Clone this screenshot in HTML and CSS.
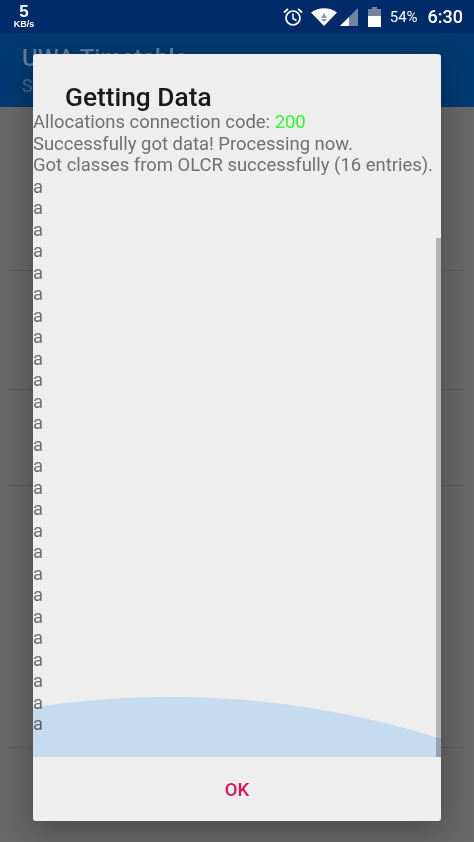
FILE: index.html
```html
<!DOCTYPE html>
<html lang="en">
<head>
    <meta charset="UTF-8">
    <meta name="viewport" content="width=device-width, initial-scale=1.0">
    <title>UWA Timetable</title>
    <link rel="stylesheet" href="styles.css">
</head>
<body>
    <div class="status-bar">
        <div class="speed"><span class="speed-num">5</span><span class="speed-unit">KB/s</span></div>
        <div class="status-right">
            <svg class="icon-alarm" width="20" height="20" viewBox="0 0 20 20">
                <circle cx="10" cy="11" r="7" fill="none" stroke="#fff" stroke-width="1.7"/>
                <path d="M10 6.5V11.5L13.5 13.5" fill="none" stroke="#fff" stroke-width="1.5"/>
                <path d="M1 5.5L5 1.8M19 5.5L15 1.8" fill="none" stroke="#fff" stroke-width="1.8"/>
            </svg>
            <svg class="icon-wifi" width="26" height="18" viewBox="0 0 26 18">
                <path d="M0 4.5C7 -1.2 19 -1.2 26 4.5L13 18Z" fill="#fff"/>
                <path d="M13 5L16 10H10Z" fill="#8a97ad"/>
                <path d="M10 11H16L13 14Z" fill="#8a97ad"/>
            </svg>
            <svg class="icon-signal" width="18" height="18" viewBox="0 0 18 18">
                <path d="M18 0V18H0Z" fill="#76859f"/>
                <path d="M9 9V18H0Z" fill="#fff"/>
            </svg>
            <svg class="icon-battery" width="13" height="20" viewBox="0 0 13 20">
                <path d="M4 0H9V2H13V20H0V2H4Z" fill="#76859f"/>
                <rect y="9" width="13" height="11" fill="#fff"/>
            </svg>
            <span class="battery-pct">54%</span>
            <span class="clock">6:30</span>
        </div>
    </div>
    <div class="app-bar">
        <div class="app-title">UWA Timetable</div>
        <div class="app-sub">S</div>
    </div>
    <div class="list">
        <div class="row row-a"></div>
        <div class="row row-b"></div>
        <div class="row row-c"></div>
        <div class="row row-d"></div>
    </div>

    <div class="dialog">
        <h1 class="dialog-title">Getting Data</h1>
        <div class="dialog-body">
            <p class="log">Allocations connection code: <span class="code">200</span><br>Successfully got data! Processing now.<br>Got classes from OLCR successfully (16 entries).<br>a<br>a<br>a<br>a<br>a<br>a<br>a<br>a<br>a<br>a<br>a<br>a<br>a<br>a<br>a<br>a<br>a<br>a<br>a<br>a<br>a<br>a<br>a<br>a<br>a<br>a</p>
            <div class="scrollbar"></div>
            <div class="ripple"></div>
        </div>
        <div class="dialog-actions">
            <button class="ok-button">OK</button>
        </div>
    </div>
</body>
</html>
```

FILE: styles.css
```css
* {
    box-sizing: border-box;
}
html, body {
    height: 100%;
}
body {
    margin: 0;
    display: flex;
    flex-direction: column;
    overflow: hidden;
    font-family: Roboto, sans-serif;
    background-color: #676767;
}
.status-bar {
    height: 33px;
    flex: none;
    display: flex;
    justify-content: space-between;
    align-items: center;
    padding: 0 11px 0 12px;
    background-color: #012a69;
    color: #ffffff;
}
.speed {
    width: 24px;
    display: flex;
    flex-direction: column;
    align-items: center;
    font-family: "Liberation Sans", sans-serif;
    font-weight: bold;
}
.speed-num {
    font-size: 17px;
    line-height: 14px;
}
.speed-unit {
    font-size: 9px;
    line-height: 10px;
}
.status-right {
    display: flex;
    align-items: center;
}
.icon-alarm {
    margin-right: 8px;
}
.icon-wifi {
    margin-right: 3px;
}
.icon-signal {
    margin-right: 10px;
}
.icon-battery {
    margin-right: 9px;
}
.battery-pct {
    font-size: 15px;
    margin-right: 10px;
}
.clock {
    font-size: 18px;
    font-weight: 500;
}
.app-bar {
    height: 74px;
    flex: none;
    padding: 10px 22px 0;
    background-color: #003a70;
}
.app-title {
    font-size: 24px;
    font-weight: 500;
    line-height: 30px;
    color: #5f7f9c;
}
.app-sub {
    font-size: 18px;
    line-height: 26px;
    color: #3f6b94;
}
.list {
    padding: 0 10px 0 8px;
}
.row {
    border-bottom: 1px solid #5b5b5b;
}
.row-a {
    height: 164px;
}
.row-b {
    height: 119px;
}
.row-c {
    height: 96px;
}
.row-d {
    height: 262px;
}
.dialog {
    position: absolute;
    left: 33px;
    top: 54px;
    width: 408px;
    height: 767px;
    display: flex;
    flex-direction: column;
    background-color: #eeeeee;
    border-radius: 3px;
    box-shadow: 0 8px 30px rgba(0, 0, 0, 0.3);
}
.dialog-title {
    margin: 0;
    padding: 28px 32px 0;
    height: 57px;
    font-size: 26.3px;
    font-weight: 500;
    line-height: 30px;
    color: #1a1a1a;
}
.dialog-body {
    position: relative;
    flex: 1;
    overflow: hidden;
}
.log {
    margin: 0;
    padding-top: 1px;
    font-size: 18.45px;
    line-height: 21.5px;
    color: #707070;
}
.code {
    color: #2dfb2d;
}
.scrollbar {
    position: absolute;
    right: 0;
    top: 127px;
    bottom: 0;
    width: 5px;
    background-color: #b1b1b1;
}
.ripple {
    position: absolute;
    left: -763px;
    top: 586px;
    width: 1800px;
    height: 1800px;
    border-radius: 50%;
    background-color: #d4ebff;
    mix-blend-mode: multiply;
}
.dialog-actions {
    height: 64px;
    flex: none;
    display: flex;
    align-items: center;
    justify-content: center;
    padding-top: 2px;
}
.ok-button {
    padding: 0;
    border: none;
    background: none;
    font-family: Roboto, sans-serif;
    font-size: 18.5px;
    font-weight: 500;
    color: #e0115f;
}
```
